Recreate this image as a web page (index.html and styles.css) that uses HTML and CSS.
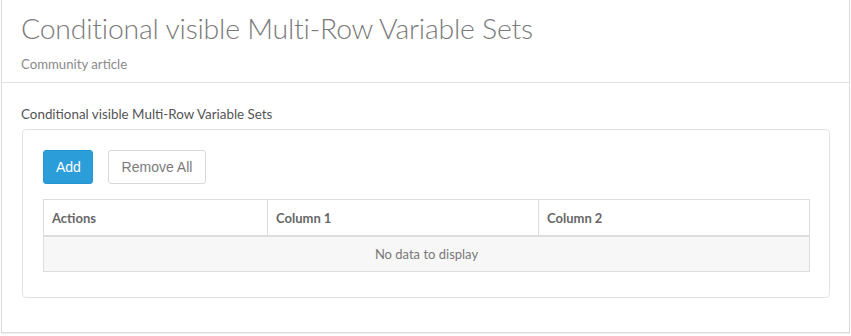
FILE: index.html
```html
<!DOCTYPE html>
<html>
<head>
<meta charset="utf-8">
<link rel="stylesheet" href="styles.css">
</head>
<body>
<div class="panel">
  <div class="panel-header">
    <h1 class="title">Conditional visible Multi-Row Variable Sets</h1>
    <div class="subtitle">Community article</div>
  </div>
  <div class="panel-body">
    <div class="label">Conditional visible Multi-Row Variable Sets</div>
    <div class="card">
      <div class="toolbar">
        <button class="btn btn-primary">Add</button>
        <button class="btn btn-default">Remove All</button>
      </div>
      <table class="grid">
        <colgroup>
          <col class="c-actions">
          <col class="c-col">
          <col class="c-col">
        </colgroup>
        <thead>
          <tr><th>Actions</th><th>Column 1</th><th>Column 2</th></tr>
        </thead>
        <tbody>
          <tr><td colspan="3" class="empty">No data to display</td></tr>
        </tbody>
      </table>
    </div>
  </div>
</div>
</body>
</html>
```

FILE: styles.css
```css
html, body {
  margin: 0;
  padding: 0;
  background: #ffffff;
}
body {
  font-family: "Lato", "Open Sans", sans-serif;
  width: 851px;
  height: 336px;
  overflow: hidden;
}
.panel {
  margin: 0 1px;
  border: 1px solid #dcdcdc;
  border-top: none;
  box-shadow: 0 1px 1px rgba(0,0,0,0.06);
  height: 333px;
  box-sizing: border-box;
}
.panel-header {
  padding: 10px 20px 0 19px;
  height: 83px;
  box-sizing: border-box;
  border-bottom: 1px solid #e2e2e2;
}
.title {
  margin: 0;
  font-weight: 300;
  font-size: 28.4px;
  line-height: 36px;
  color: #7a7a7a;
  letter-spacing: -0.2px;
}
.subtitle {
  margin-top: 9px;
  font-size: 13.2px;
  line-height: 18px;
  color: #8a8a8a;
}
.panel-body {
  padding: 22px 19px 0 20px;
}
.label {
  font-size: 13.4px;
  line-height: 18px;
  color: #555555;
  margin-bottom: 6px;
  margin-left: -1px;
}
.card {
  border: 1px solid #e3e3e3;
  border-radius: 4px;
  padding: 20px 20px 25px 20px;
}
.toolbar {
  display: flex;
  gap: 15px;
  margin-bottom: 15px;
}
.btn {
  font-family: "Liberation Sans", Arial, sans-serif;
  font-size: 14px;
  height: 34px;
  border-radius: 3px;
  padding: 0 12px;
  box-sizing: border-box;
}
.btn-primary {
  background: #2b9ed9;
  border: 1px solid #2696d0;
  color: #ffffff;
  width: 50px;
}
.btn-default {
  background: #ffffff;
  border: 1px solid #d9d9d9;
  color: #7b7b7b;
  width: 98px;
}
.grid {
  width: 766px;
  border-collapse: collapse;
  table-layout: fixed;
}
.c-actions { width: 224px; }
.c-col { width: 271px; }
.grid th {
  text-align: left;
  font-size: 13px;
  font-weight: 700;
  color: #676767;
  height: 35px;
  padding: 0 8px;
  border: 1px solid #dddddd;
  border-bottom: 2px solid #dddddd;
}
.grid td.empty {
  background: #f7f7f7;
  border: 1px solid #dddddd;
  text-align: center;
  font-size: 13px;
  color: #777777;
  height: 34px;
  padding: 0;
}
```
